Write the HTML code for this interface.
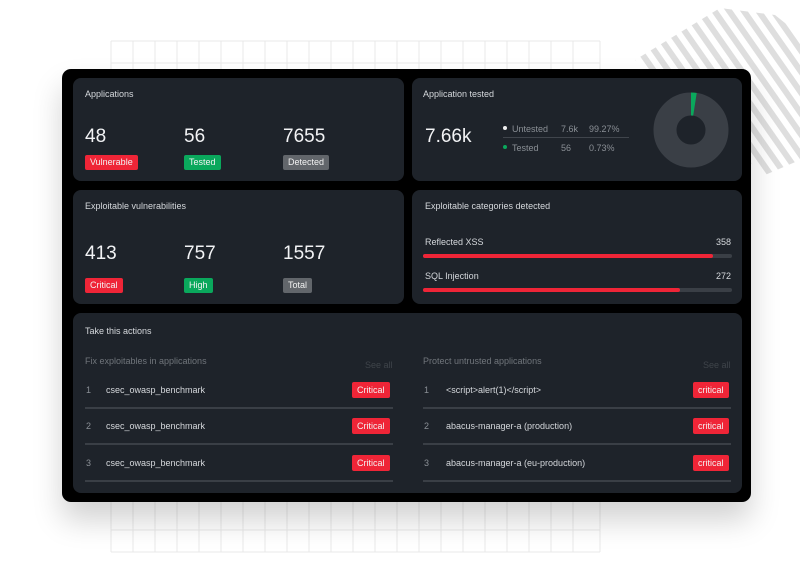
<!DOCTYPE html>
<html><head><meta charset="utf-8"><style>
*{margin:0;padding:0;box-sizing:border-box}
body{width:800px;height:575px;background:#fff;position:relative;overflow:hidden;font-family:"Liberation Sans",sans-serif;}
.a{position:absolute}
.panel{left:62px;top:69px;width:689px;height:433px;background:#000;border-radius:9px;box-shadow:0 18px 30px rgba(0,0,0,0.18)}
.card{position:absolute;background:#1e232a;border-radius:8px}
.t{position:absolute;color:#d5d8dc;font-size:9px;white-space:nowrap}
.num{position:absolute;color:#f2f3f5;font-size:19px;white-space:nowrap}
.b{position:absolute;height:15px;line-height:15px;font-size:9px;color:#f2f2f2;padding:0 5px;border-radius:2px;white-space:nowrap}
.red{background:#ef2537}.grn{background:#0aa85c}.gry{background:#62666b}
.g{color:#8a8f95}
.line{position:absolute;height:2px;background:#3a3f46}
</style></head><body>
<svg class="a" style="left:0;top:0" width="800" height="575">
<defs>
<clipPath id="hx"><polygon points="635,60 720,8 775,15 800,35 800,160 765,175 700,120"/></clipPath>
<pattern id="st" width="12" height="12" patternUnits="userSpaceOnUse" patternTransform="rotate(-35)">
<rect width="6" height="12" fill="#dedede"/></pattern>
</defs>
<rect x="600" y="0" width="200" height="200" fill="url(#st)" clip-path="url(#hx)"/>
<g stroke="#e9e9e9" stroke-width="1" fill="none">
<path d="M111 41V245M133 41V245M155 41V245M177 41V245M199 41V245M221 41V245M243 41V245M265 41V245M287 41V245M309 41V245M331 41V245M353 41V245M375 41V245M397 41V245M419 41V245M441 41V245M463 41V245M485 41V245M507 41V245M529 41V245M551 41V245M573 41V245M600 41V245"/>
<path d="M111 41H600M111 63H600"/>
<path d="M111 502V552M133 502V552M155 502V552M177 502V552M199 502V552M221 502V552M243 502V552M265 502V552M287 502V552M309 502V552M331 502V552M353 502V552M375 502V552M397 502V552M419 502V552M441 502V552M463 502V552M485 502V552M507 502V552M529 502V552M551 502V552M573 502V552M600 502V552"/>
<path d="M111 530H600M111 552H600"/>
</g>
</svg>
<div class="a panel"></div>

<div class="card" style="left:73px;top:78px;width:331px;height:103px"></div>
<div class="t" style="left:85px;top:89px">Applications</div>
<div class="num" style="left:85px;top:126px">48</div>
<div class="num" style="left:184px;top:126px">56</div>
<div class="num" style="left:283px;top:126px">7655</div>
<div class="b red" style="left:85px;top:155px">Vulnerable</div>
<div class="b grn" style="left:184px;top:155px">Tested</div>
<div class="b gry" style="left:283px;top:155px">Detected</div>

<div class="card" style="left:412px;top:78px;width:330px;height:103px"></div>
<div class="t" style="left:423px;top:89px">Application tested</div>
<div class="num" style="left:425px;top:126px">7.66k</div>
<div class="a" style="left:503px;top:126px;width:4px;height:4px;border-radius:50%;background:#eee"></div>
<div class="t g" style="left:512px;top:124px">Untested</div>
<div class="t g" style="left:561px;top:124px">7.6k</div>
<div class="t g" style="left:589px;top:124px">99.27%</div>
<div class="a" style="left:503px;top:137px;width:126px;height:1px;background:#40454c"></div>
<div class="a" style="left:503px;top:145px;width:4px;height:4px;border-radius:50%;background:#0aa85c"></div>
<div class="t g" style="left:512px;top:143px">Tested</div>
<div class="t g" style="left:561px;top:143px">56</div>
<div class="t g" style="left:589px;top:143px">0.73%</div>
<svg class="a" style="left:653px;top:92px" width="76" height="76">
<circle cx="38" cy="38" r="26" fill="none" stroke="#3a3f46" stroke-width="23"/>
<circle cx="38" cy="38" r="26" fill="none" stroke="#0aa85c" stroke-width="23" stroke-dasharray="4 200" transform="rotate(-90 38 38)"/>
</svg>

<div class="card" style="left:73px;top:190px;width:331px;height:114px"></div>
<div class="t" style="left:85px;top:201px">Exploitable vulnerabilities</div>
<div class="num" style="left:85px;top:243px">413</div>
<div class="num" style="left:184px;top:243px">757</div>
<div class="num" style="left:283px;top:243px">1557</div>
<div class="b red" style="left:85px;top:278px">Critical</div>
<div class="b grn" style="left:184px;top:278px">High</div>
<div class="b gry" style="left:283px;top:278px">Total</div>

<div class="card" style="left:412px;top:190px;width:330px;height:114px"></div>
<div class="t" style="left:425px;top:201px">Exploitable categories detected</div>
<div class="t" style="left:425px;top:237px">Reflected XSS</div>
<div class="t" style="left:716px;top:237px">358</div>
<div class="a" style="left:423px;top:254px;width:309px;height:4px;border-radius:2px;background:#3a3f46"></div>
<div class="a" style="left:423px;top:254px;width:290px;height:4px;border-radius:2px;background:#ef2537"></div>
<div class="t" style="left:425px;top:271px">SQL Injection</div>
<div class="t" style="left:716px;top:271px">272</div>
<div class="a" style="left:423px;top:288px;width:309px;height:4px;border-radius:2px;background:#3a3f46"></div>
<div class="a" style="left:423px;top:288px;width:257px;height:4px;border-radius:2px;background:#ef2537"></div>

<div class="card" style="left:73px;top:313px;width:669px;height:180px"></div>
<div class="t" style="left:85px;top:326px">Take this actions</div>
<div class="t" style="left:85px;top:356px;color:#70757b">Fix exploitables in applications</div>
<div class="t" style="left:365px;top:360px;color:#3f444a">See all</div>
<div class="t" style="left:423px;top:356px;color:#70757b">Protect untrusted applications</div>
<div class="t" style="left:703px;top:360px;color:#3f444a">See all</div>

<div class="t g" style="left:86px;top:385px">1</div><div class="t" style="left:106px;top:385px">csec_owasp_benchmark</div><div class="b red" style="left:352px;top:382px;height:16px;line-height:16px">Critical</div>
<div class="line" style="left:85px;top:407px;width:308px"></div>
<div class="t g" style="left:86px;top:421px">2</div><div class="t" style="left:106px;top:421px">csec_owasp_benchmark</div><div class="b red" style="left:352px;top:418px;height:16px;line-height:16px">Critical</div>
<div class="line" style="left:85px;top:443px;width:308px"></div>
<div class="t g" style="left:86px;top:458px">3</div><div class="t" style="left:106px;top:458px">csec_owasp_benchmark</div><div class="b red" style="left:352px;top:455px;height:16px;line-height:16px">Critical</div>
<div class="line" style="left:85px;top:480px;width:308px"></div>

<div class="t g" style="left:424px;top:385px">1</div><div class="t" style="left:446px;top:385px">&lt;script&gt;alert(1)&lt;/script&gt;</div><div class="b red" style="left:693px;top:382px;height:16px;line-height:16px">critical</div>
<div class="line" style="left:423px;top:407px;width:308px"></div>
<div class="t g" style="left:424px;top:421px">2</div><div class="t" style="left:446px;top:421px">abacus-manager-a (production)</div><div class="b red" style="left:693px;top:418px;height:16px;line-height:16px">critical</div>
<div class="line" style="left:423px;top:443px;width:308px"></div>
<div class="t g" style="left:424px;top:458px">3</div><div class="t" style="left:446px;top:458px">abacus-manager-a (eu-production)</div><div class="b red" style="left:693px;top:455px;height:16px;line-height:16px">critical</div>
<div class="line" style="left:423px;top:480px;width:308px"></div>
</body></html>
